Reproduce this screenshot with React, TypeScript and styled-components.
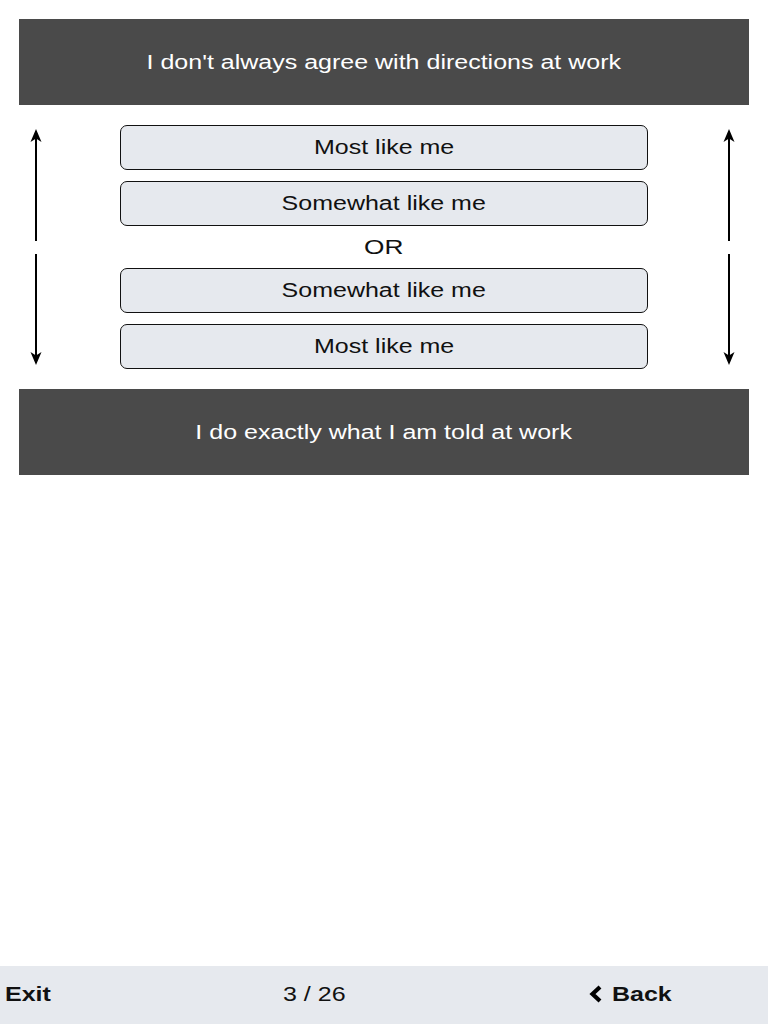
import React from 'react';
import styled, { createGlobalStyle } from 'styled-components';

const GlobalStyle = createGlobalStyle`
  html, body {
    margin: 0;
    padding: 0;
    background: #ffffff;
  }
  body {
    font-family: 'Liberation Sans', Arial, Helvetica, sans-serif;
    color: #111111;
  }
`;

const Page = styled.div`
  min-height: 100vh;
  display: flex;
  flex-direction: column;
`;

const Main = styled.main`
  flex: 1;
  padding: 19px 19px 0;
  display: flex;
  flex-direction: column;
`;

// the original text is drawn wide, so glyphs get stretched horizontally
const Wide = styled.span<{ $origin?: string }>`
  display: inline-block;
  transform: scaleX(1.25);
  transform-origin: ${(p) => p.$origin || 'center'};
  white-space: nowrap;
`;

const Statement = styled.div`
  height: 86px;
  background-color: #4a4a4a;
  color: #ffffff;
  display: flex;
  align-items: center;
  justify-content: center;
  font-size: 20px;
`;

const Scale = styled.div`
  display: flex;
  justify-content: space-between;
  padding: 20px 6px 20px 0;
`;

const ArrowCol = styled.div<{ $width: number }>`
  width: ${(p) => p.$width}px;
  display: flex;
  justify-content: center;
`;

const Options = styled.div`
  width: 528px;
  display: flex;
  flex-direction: column;
  gap: 11px;
`;

const Option = styled.button`
  height: 45px;
  width: 100%;
  box-sizing: border-box;
  background-color: #e6e9ee;
  border: 1px solid #111111;
  border-radius: 7px;
  font-family: inherit;
  font-size: 20px;
  color: #111111;
  cursor: pointer;
  padding: 0;
`;

const Or = styled.div`
  height: 20px;
  display: flex;
  align-items: center;
  justify-content: center;
  font-size: 21px;
  line-height: 20px;
`;

const Footer = styled.footer`
  height: 58px;
  background-color: #e6e9ee;
  display: grid;
  grid-template-columns: 278px 305px 1fr;
  align-items: center;
  padding: 0 0 2px 5px;
  box-sizing: border-box;
  font-size: 20px;
`;

const FooterLink = styled.span`
  font-weight: bold;
  display: flex;
  align-items: center;
  gap: 9px;
`;

const Counter = styled.span``;

const Arrows = () => (
  <svg width="16" height="244" viewBox="0 0 16 244">
    <line x1="8" y1="12" x2="8" y2="116" stroke="#000" strokeWidth="2" />
    <polygon points="8,4 2.5,17 8,13.5 13.5,17" fill="#000" />
    <line x1="8" y1="129" x2="8" y2="232" stroke="#000" strokeWidth="2" />
    <polygon points="8,240 2.5,227 8,230.5 13.5,227" fill="#000" />
  </svg>
);

const Chevron = () => (
  <svg width="15" height="18" viewBox="0 0 15 18">
    <polyline
      points="12,2 4.5,9 12,16"
      fill="none"
      stroke="#000"
      strokeWidth="4.2"
      strokeLinejoin="miter"
    />
  </svg>
);

export default function App() {
  return (
    <Page>
      <GlobalStyle />
      <Main>
        <Statement>
          <Wide>I don't always agree with directions at work</Wide>
        </Statement>
        <Scale>
          <ArrowCol $width={34}>
            <Arrows />
          </ArrowCol>
          <Options>
            <Option>
              <Wide>Most like me</Wide>
            </Option>
            <Option>
              <Wide>Somewhat like me</Wide>
            </Option>
            <Or>
              <Wide>OR</Wide>
            </Or>
            <Option>
              <Wide>Somewhat like me</Wide>
            </Option>
            <Option>
              <Wide>Most like me</Wide>
            </Option>
          </Options>
          <ArrowCol $width={28}>
            <Arrows />
          </ArrowCol>
        </Scale>
        <Statement>
          <Wide>I do exactly what I am told at work</Wide>
        </Statement>
      </Main>
      <Footer>
        <FooterLink>
          <Wide $origin="left">Exit</Wide>
        </FooterLink>
        <Counter>
          <Wide $origin="left">3 / 26</Wide>
        </Counter>
        <FooterLink>
          <Chevron />
          <Wide $origin="left">Back</Wide>
        </FooterLink>
      </Footer>
    </Page>
  );
}
